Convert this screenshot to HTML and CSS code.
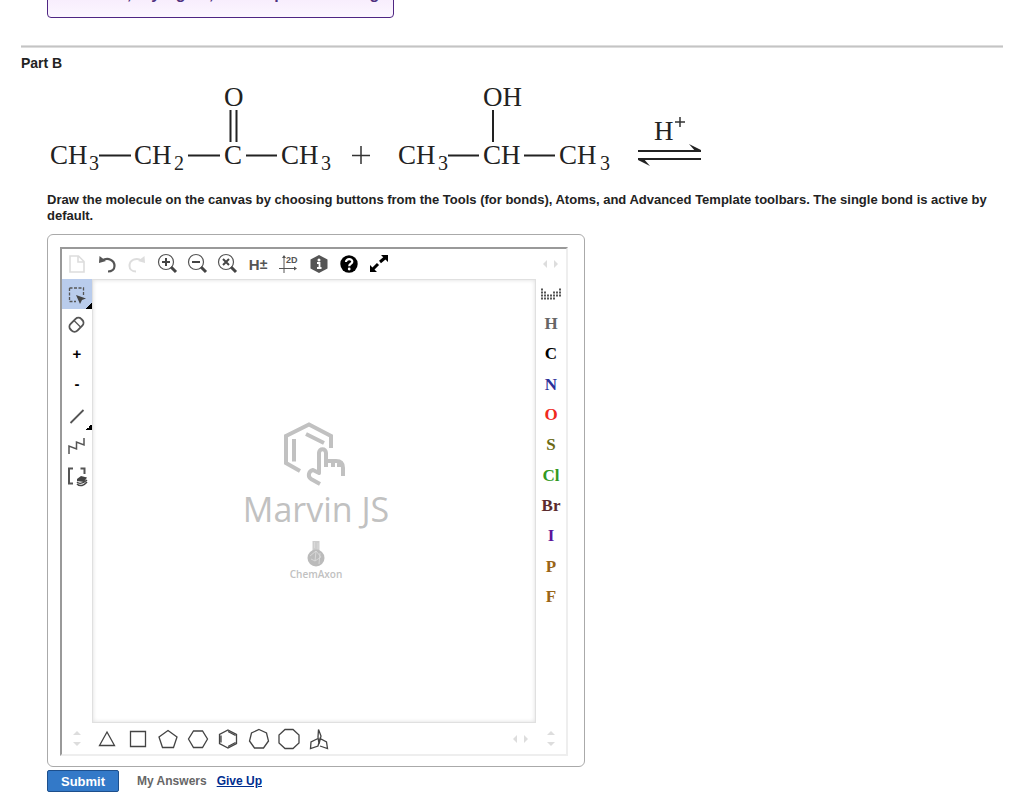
FILE: index.html
```html
<!DOCTYPE html>
<html lang="en">
<head>
    <meta charset="UTF-8">
    <meta name="viewport" content="width=device-width, initial-scale=1.0">
    <title>Part B</title>
    <link rel="stylesheet" href="styles.css">
</head>
<body>
    <div class="feedback">Incorrect; Try Again; 5 attempts remaining</div>
    <hr>
    <h2>Part B</h2>
    <div class="part">
        <svg class="reaction" viewBox="-1 -8 660 100" width="660" height="100">
            <g class="formula">
                <text x="2" y="80">CH</text><text class="sub" x="41" y="86">3</text>
                <text x="86" y="80">CH</text><text class="sub" x="126" y="86">2</text>
                <text x="176" y="80">C</text>
                <text x="176" y="22">O</text>
                <text x="233" y="80">CH</text><text class="sub" x="273" y="86">3</text>
                <text x="350" y="80">CH</text><text class="sub" x="390" y="86">3</text>
                <text x="435" y="80">CH</text>
                <text x="435" y="22">OH</text>
                <text x="511" y="80">CH</text><text class="sub" x="552" y="86">3</text>
                <text x="606" y="56">H</text>
            </g>
            <path class="bond" d="M51 71.500H83M140 71.500H172M198 71.500H229M400 71.500H431M476 71.500H507M182.500 26V58M188.500 26V58M445 26V58M590 67H653M590 75H653"/>
            <path class="plus" d="M304 71.500H322M313 62V80M627 38H637M632 33V43"/>
            <path d="M641 60L653 66V68H648ZM602 82L590 76V74H595Z" fill="#222"/>
        </svg>
        <p class="instruction">Draw the molecule on the canvas by choosing buttons from the Tools (for bonds), Atoms, and Advanced Template toolbars. The single bond is active by default.</p>

        <div class="frame">
            <div class="editor">
                <div class="topbar">
                    <div class="tools">
                        <button aria-label="New"><svg viewBox="0 0 30 30"><path d="M8 7H16.500L22 12.500V23H8ZM16 7V13H22" fill="none" stroke="#ddd" stroke-width="1.600"/></svg></button>
                        <button aria-label="Undo"><svg viewBox="0 0 30 30"><path d="M10 11.500C16 8 22.500 11 22.500 17C22.500 20 20 22.500 16 22.500" fill="none" stroke="#555" stroke-width="2.200"/><path d="M7 14L7.500 7L14 12Z" fill="#555"/></svg></button>
                        <button aria-label="Redo"><svg viewBox="0 0 30 30"><path d="M20 11.500C14 8 7.500 11 7.500 17C7.500 20 10 22.500 14 22.500" fill="none" stroke="#ddd" stroke-width="2"/><path d="M23 14L22.500 7L16 12Z" fill="#ddd"/></svg></button>
                        <button aria-label="Zoom in"><svg viewBox="0 0 30 30"><circle cx="13" cy="13" r="7.500" fill="none" stroke="#555" stroke-width="1.200"/><path d="M13 9V17M9 13H17" stroke="#444" stroke-width="2"/><path d="M18 18L23 23" stroke="#444" stroke-width="3"/></svg></button>
                        <button aria-label="Zoom out"><svg viewBox="0 0 30 30"><circle cx="13" cy="13" r="7.500" fill="none" stroke="#555" stroke-width="1.200"/><path d="M9 13H17" stroke="#444" stroke-width="2"/><path d="M18 18L23 23" stroke="#444" stroke-width="3"/></svg></button>
                        <button aria-label="Reset zoom"><svg viewBox="0 0 30 30"><circle cx="13" cy="13" r="7.500" fill="none" stroke="#555" stroke-width="1.200"/><path d="M10 10L16 16M16 10L10 16" stroke="#444" stroke-width="2"/><path d="M18 18L23 23" stroke="#444" stroke-width="3"/></svg></button>
                        <button class="hydrogen">H<span>±</span></button>
                        <button aria-label="Clean 2D"><svg viewBox="0 0 30 30"><path d="M11 7V24M6 19.500H23" fill="none" stroke="#555"/><path d="M9 9L11 6L13 9ZM21 17.500L24 19.500L21 21.500Z" fill="#555"/><text x="13" y="14" class="label2d">2D</text></svg></button>
                        <button aria-label="About"><svg viewBox="0 0 30 30"><path d="M15 6L23.500 10.500V19.500L15 24L6.500 19.500V10.500Z" fill="#555"/><circle cx="15" cy="11" r="1.500" fill="#fff"/><path d="M13 14H15.500V19M13 19H17.500" fill="none" stroke="#fff" stroke-width="1.800"/></svg></button>
                        <button aria-label="Help"><svg viewBox="0 0 30 30"><circle cx="15" cy="15" r="8.700"/><path d="M12 13C12 9 18.500 9.500 18.300 12.800C18 15 15.200 14.500 15.200 17.200" fill="none" stroke="#fff" stroke-width="2.200"/><circle cx="15.200" cy="20" r="1.400" fill="#fff"/></svg></button>
                        <button aria-label="Full screen"><svg viewBox="0 0 30 30"><path d="M8 21L14 15M16 13L22 8" stroke="#000" stroke-width="3"/><path d="M24 6V13L17 6ZM6 23V16L13 23Z"/></svg></button>
                    </div>
                    <button aria-label="Scroll tools"><svg viewBox="0 0 30 30"><path d="M11 11V19L7 15ZM18 11V19L22 15Z" fill="#ddd"/></svg></button>
                </div>

                <div class="leftbar">
                    <button class="selected more" aria-label="Select"><svg viewBox="0 0 30 30"><path d="M7.500 9H21.500V16M7.500 9V22.500H14" fill="none" stroke="#555" stroke-width="1.300" stroke-dasharray="3 1.500"/><path d="M14 16L24 19.500L20 21L18 25Z" fill="#444"/></svg></button>
                    <button aria-label="Erase"><svg viewBox="0 0 30 30"><rect x="7" y="11" width="15" height="9.500" rx="4" transform="rotate(-45 14.500 15.800)" fill="none" stroke="#555" stroke-width="1.900"/><path d="M12 11.500L18.500 18" stroke="#555" stroke-width="1.200"/></svg></button>
                    <button class="charge">+</button>
                    <button class="charge">-</button>
                    <button class="more" aria-label="Single bond"><svg viewBox="0 0 30 30"><path d="M8.500 23L21.500 10" stroke="#555" stroke-width="1.800"/></svg></button>
                    <button aria-label="Chain"><svg viewBox="0 0 30 30"><path d="M7 23V15L14.500 18V11L22 14V7" fill="none" stroke="#555" stroke-width="1.500"/></svg></button>
                    <button aria-label="Brackets"><svg viewBox="0 0 30 30"><path d="M11 7.500H7V22.500H11M18.500 7.500H22.500V13" fill="none" stroke="#555" stroke-width="2"/><path d="M15 18L19 15L25 16.500L22 21L15 20Z" fill="#444"/><path d="M15 21C17 23 21 22.500 25 19M15 23C18 26 22 24.500 25 21" fill="none" stroke="#444" stroke-width="1.500"/></svg></button>
                </div>

                <div class="canvas">
                    <svg class="marvin" viewBox="0 0 66 64" width="66" height="64">
                        <g fill="none" stroke="#c1c1c1" stroke-width="4">
                            <path d="M17 49L3 41V14L26 2.500L48 14V26M11 17V39.500M23 12L41 21"/>
                            <path d="M37 62L28 57C24 54 26 49 30 48L36 51V31C36 26 43 26 43 31V45M43 39H53C58 39 60 42 60 46V54M50 40V45M56 41V45" stroke-linejoin="round"/>
                        </g>
                    </svg>
                    <div class="brand">Marvin JS</div>
                    <svg class="flask" viewBox="0 0 18 26" width="18" height="26">
                        <path d="M5.500 0H12.500V9H5.500Z" fill="#cecece"/>
                        <circle cx="9" cy="17" r="8.500" fill="#bbb"/>
                        <path d="M7.500 1V7M11 2V8M3 15L9 10L14 16L8 20L4 18M9 10L8 20M13 12L12 23" fill="none" stroke="#ddd" stroke-width="0.800"/>
                    </svg>
                    <div class="vendor">ChemAxon</div>
                </div>

                <div class="rightbar">
                    <button class="periodic" aria-label="Periodic table"><svg viewBox="0 0 22 12" width="22" height="12"><path d="M1 1.500H3M19 1.500H21M1 4.500H6M13 4.500H21M1 7.500H21M1 10.500H15" fill="none" stroke="#555" stroke-width="2" stroke-dasharray="2 1"/></svg></button>
                    <div class="atoms">
                        <button class="h">H</button>
                        <button class="c">C</button>
                        <button class="n">N</button>
                        <button class="o">O</button>
                        <button class="s">S</button>
                        <button class="cl">Cl</button>
                        <button class="br">Br</button>
                        <button class="i">I</button>
                        <button class="p">P</button>
                        <button class="f">F</button>
                    </div>
                </div>

                <div class="bottombar">
                    <div class="templates">
                        <button aria-label="Scroll up or down"><svg viewBox="0 0 30 30"><path d="M11 11H19L15 7ZM11 18H19L15 22Z" fill="#ddd"/></svg></button>
                        <button aria-label="Cyclopropane"><svg viewBox="0 0 30 30" class="ring"><path d="M15 8L22.500 21.500H7.500Z"/></svg></button>
                        <button aria-label="Cyclobutane"><svg viewBox="0 0 30 30" class="ring"><path d="M7.500 7.500H22.500V22.500H7.500Z"/></svg></button>
                        <button aria-label="Cyclopentane"><svg viewBox="0 0 30 30" class="ring"><path d="M15 6.500L24 13L20.500 23.500H9.500L6 13Z"/></svg></button>
                        <button aria-label="Cyclohexane"><svg viewBox="0 0 30 30" class="ring"><path d="M10.500 7H19.500L24.500 15L19.500 23.500H10.500L5.500 15Z"/></svg></button>
                        <button aria-label="Benzene"><svg viewBox="0 0 30 30" class="ring"><path d="M15 6L23.500 10.500V19.500L15 24L6.500 19.500V10.500ZM15 7.500L22.500 11.500M22.500 18.500L15 22.500M8 11.500V18.500"/></svg></button>
                        <button aria-label="Cycloheptane"><svg viewBox="0 0 30 30" class="ring"><path d="M15 5.500L22.500 9L24.500 17L19.500 24H10.500L5.500 17L7.500 9Z"/></svg></button>
                        <button aria-label="Cyclooctane"><svg viewBox="0 0 30 30" class="ring"><path d="M11 5.500H19L25 11V19L19 24.500H11L5 19V11Z"/></svg></button>
                        <button aria-label="Bicyclo template"><svg viewBox="0 0 30 30" class="ring"><path d="M14.500 5.500L17 12L15 20L14 13ZM14 14.500L7 18L6.500 24.500L14 22L16 14.500L22.500 18L23.500 24.500L16 22"/></svg></button>
                    </div>
                    <div class="scrolls">
                        <button aria-label="Scroll templates"><svg viewBox="0 0 30 30"><path d="M11 11V19L7 15ZM18 11V19L22 15Z" fill="#ddd"/></svg></button>
                        <button aria-label="Scroll atoms"><svg viewBox="0 0 30 30"><path d="M11 11H19L15 7ZM11 18H19L15 22Z" fill="#ddd"/></svg></button>
                    </div>
                </div>
            </div>
        </div>

        <div class="actions">
            <button class="submit">Submit</button>
            <span>My Answers</span>
            <a href="#">Give Up</a>
        </div>
    </div>
</body>
</html>
```
FILE: styles.css
```css
* {
    box-sizing: border-box;
}
body {
    margin: 0 21px;
    background: #fff;
    color: #222;
    font-family: "Liberation Sans", Arial, sans-serif;
    font-size: 13px;
    font-weight: bold;
}
button {
    display: flex;
    align-items: center;
    justify-content: center;
    width: 30px;
    height: 30px;
    padding: 0;
    border: none;
    background: none;
    color: #000;
    font: inherit;
    cursor: pointer;
}
button svg {
    display: block;
    flex-shrink: 0;
}
/* scrolled so only the end of the message is in view */
.feedback {
    width: max-content;
    margin: -22px 0 0 26px;
    padding: 7px 14px 15px 10px;
    border: 1px solid #4f2683;
    border-radius: 4px;
    background: linear-gradient(#f3e2fb, #fcf7ff);
    color: #4f3080;
    font-size: 16px;
    line-height: 16px;
}
hr {
    height: 3px;
    margin: 27px 0 0;
    border: 1px solid #ddd;
    border-width: 1px 0;
    background: #c4c4c4;
}
h2 {
    margin: 7px 0 0;
    font-size: 14px;
    line-height: 16px;
}
.part {
    margin: 5px 0 0 26px;
}
.reaction {
    display: block;
}
.formula {
    font-family: "Liberation Serif", "Times New Roman", serif;
    font-size: 27px;
    font-weight: normal;
    fill: #222;
}
.formula .sub {
    font-size: 20px;
}
.bond {
    fill: none;
    stroke: #222;
    stroke-width: 2;
}
.plus {
    fill: none;
    stroke: #333;
    stroke-width: 1.5;
}
.instruction {
    margin: 16px 0 10px;
    line-height: 16px;
}
.frame {
    width: max-content;
    padding: 12px 16px 10px 12px;
    border: 1px solid #aaa;
    border-radius: 6px;
}
.editor {
    display: grid;
    grid-template-columns: 30px 444px 30px;
    grid-template-rows: 30px 444px 31px;
    border: 2px solid #eee;
    border-top-color: #999;
    border-left-color: #999;
}
.topbar, .bottombar {
    grid-column: 1 / 4;
    display: flex;
    align-items: end;
    justify-content: space-between;
}
.tools, .templates {
    display: flex;
    justify-content: space-between;
}
.tools {
    width: 332px;
}
.templates {
    width: 272px;
}
.scrolls {
    display: flex;
}
.hydrogen {
    color: #555;
    font-size: 15px;
}
.hydrogen span {
    font-size: 14px;
}
.label2d {
    fill: #555;
    font-size: 9px;
}
.leftbar {
    display: flex;
    flex-direction: column;
    justify-content: space-between;
    height: 212px;
}
.charge {
    font-size: 15px;
    line-height: 16px;
    padding-bottom: 2px;
}
.more {
    background: linear-gradient(135deg, transparent 50%, #000 50%) right bottom / 6px 6px no-repeat;
}
.selected {
    background-color: #b9ccec;
}
.canvas {
    display: flex;
    flex-direction: column;
    align-items: center;
    justify-content: center;
    padding-left: 4px;
    border: 1px solid #e0e0e0;
    box-shadow: inset 0 0 4px #ddd;
    color: #c1c1c1;
}
.brand {
    font-family: "Open Sans", sans-serif;
    font-size: 34px;
    font-weight: normal;
    line-height: 46px;
}
.flask {
    margin-top: 9px;
}
.vendor {
    font-family: "Open Sans", sans-serif;
    font-size: 10px;
    font-weight: 600;
    line-height: 14px;
}
.atoms {
    display: flex;
    flex-direction: column;
    justify-content: space-between;
    height: 303px;
    font-family: "Liberation Serif", "Times New Roman", serif;
    font-size: 17px;
}
.h { color: #666; }
.c { color: #000; }
.n { color: #2b3199; }
.o { color: #f02a1d; }
.s { color: #6b6a13; }
.cl { color: #32991f; }
.br { color: #5c2b2e; }
.i { color: #5c149b; }
.p, .f { color: #996515; }
.ring {
    fill: none;
    stroke: #444;
    stroke-width: 1.3;
}
.actions {
    display: flex;
    align-items: center;
    margin-top: 3px;
    color: #666;
    font-size: 12px;
}
.submit {
    width: auto;
    height: 22px;
    margin-right: 18px;
    padding: 0 13px;
    border: 1px solid #1d4f8c;
    border-radius: 2px;
    background: #3379c8;
    color: #fff;
    font-size: 13px;
}
.actions a {
    margin-left: 10px;
    color: #002d8f;
}
```
